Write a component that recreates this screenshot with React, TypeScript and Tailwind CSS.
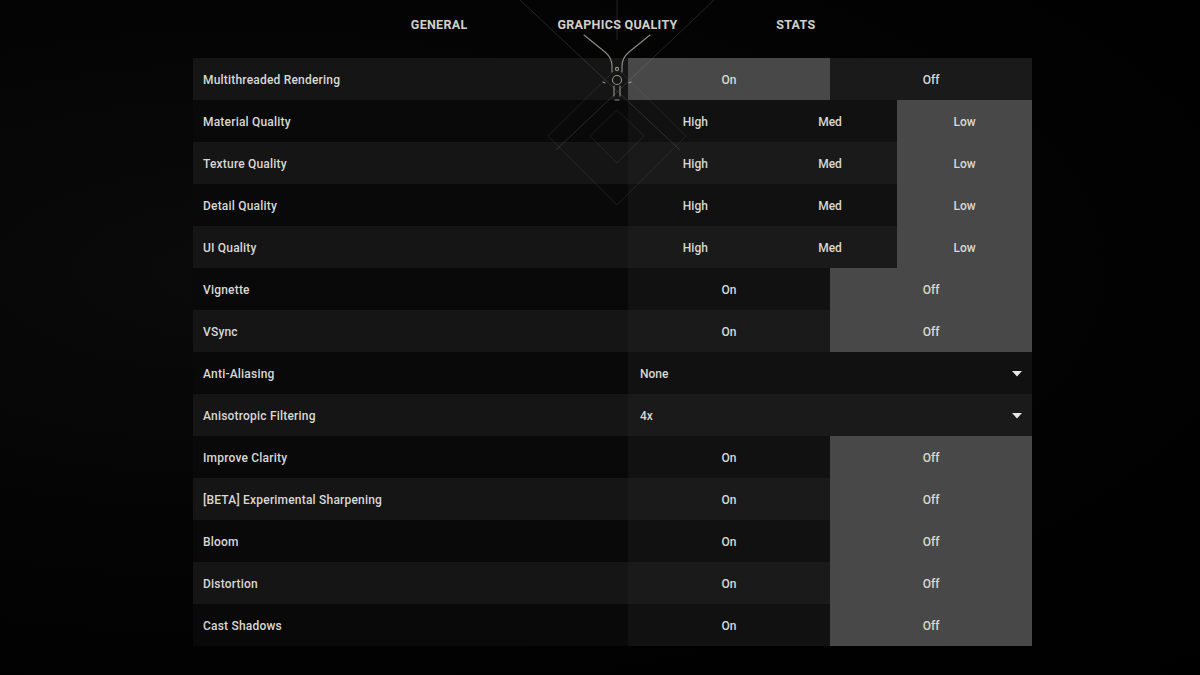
import React from 'react';

type Row =
  | { label: string; kind: 'toggle'; value: 'On' | 'Off' }
  | { label: string; kind: 'quality'; value: 'High' | 'Med' | 'Low' }
  | { label: string; kind: 'select'; value: string };

const rows: Row[] = [
  { label: 'Multithreaded Rendering', kind: 'toggle', value: 'On' },
  { label: 'Material Quality', kind: 'quality', value: 'Low' },
  { label: 'Texture Quality', kind: 'quality', value: 'Low' },
  { label: 'Detail Quality', kind: 'quality', value: 'Low' },
  { label: 'UI Quality', kind: 'quality', value: 'Low' },
  { label: 'Vignette', kind: 'toggle', value: 'Off' },
  { label: 'VSync', kind: 'toggle', value: 'Off' },
  { label: 'Anti-Aliasing', kind: 'select', value: 'None' },
  { label: 'Anisotropic Filtering', kind: 'select', value: '4x' },
  { label: 'Improve Clarity', kind: 'toggle', value: 'Off' },
  { label: '[BETA] Experimental Sharpening', kind: 'toggle', value: 'Off' },
  { label: 'Bloom', kind: 'toggle', value: 'Off' },
  { label: 'Distortion', kind: 'toggle', value: 'Off' },
  { label: 'Cast Shadows', kind: 'toggle', value: 'Off' },
];

const tabs = ['General', 'Graphics Quality', 'Stats'];

const Ornament = () => (
  <svg
    className="absolute left-0 top-0 pointer-events-none"
    width="1200"
    height="240"
    viewBox="0 0 1200 240"
    fill="none"
  >
    <g stroke="#9a9a90" strokeWidth="0.8" opacity="0.28">
      <line x1="520" y1="0" x2="680" y2="150" />
      <line x1="714" y1="0" x2="556" y2="150" />
      <line x1="617" y1="0" x2="617" y2="40" />
    </g>
    <g stroke="#9a9a90" strokeWidth="0.8" opacity="0.15">
      <path d="M617 68 L686 136 L617 205 L548 136 Z" />
      <path d="M617 110 L644 136 L617 163 L590 136 Z" />
    </g>
    <g stroke="#c8c8b8" strokeWidth="1.1" opacity="0.7" strokeLinecap="round">
      <path d="M584 35 L605 52 Q612 58 612 66 L612 72" />
      <path d="M650 35 L629 52 Q622 58 622 66 L622 72" />
      <circle cx="617" cy="80" r="4.5" />
      <circle cx="617" cy="69" r="1.6" />
      <line x1="614" y1="86" x2="614" y2="96" />
      <line x1="620" y1="86" x2="620" y2="96" />
      <line x1="615" y1="100" x2="619" y2="100" />
      <line x1="603" y1="82" x2="605" y2="83" />
      <line x1="631" y1="82" x2="629" y2="83" />
    </g>
  </svg>
);

const Caret = () => (
  <svg width="10" height="6" viewBox="0 0 10 6">
    <path d="M0 0 H10 L5 5.5 Z" fill="#e6e6e6" />
  </svg>
);

function Cell({ text, active }: { text: string; active: boolean }) {
  return (
    <div
      className={`flex-1 flex items-center justify-center pt-[2px] ${
        active ? 'bg-[#484848]' : ''
      }`}
    >
      {text}
    </div>
  );
}

function Value({ row }: { row: Row }) {
  if (row.kind === 'select') {
    return (
      <div className="flex-1 flex items-center justify-between pl-3 pr-[10px] pt-[2px]">
        <span>{row.value}</span>
        <Caret />
      </div>
    );
  }
  const opts = row.kind === 'toggle' ? ['On', 'Off'] : ['High', 'Med', 'Low'];
  return (
    <div className="flex-1 flex">
      {opts.map((o) => (
        <Cell key={o} text={o} active={o === row.value} />
      ))}
    </div>
  );
}

export default function App() {
  return (
    <div
      className="relative w-[1200px] h-[675px] overflow-hidden bg-[#020202] text-[#d8d8d4]"
      style={{ fontFamily: 'Roboto, "Noto Sans", sans-serif' }}
    >
      <div className="absolute inset-0 bg-[radial-gradient(ellipse_at_20%_40%,#0a0a0a_0%,#030303_55%,#000_100%)]" />
      <div className="relative">
        <div className="h-[58px] flex justify-center pl-[35px]">
          <div className="grid grid-cols-3 w-[535px] items-center">
            {tabs.map((t) => (
              <div
                key={t}
                className="text-center uppercase text-[12.5px] font-bold tracking-[0.3px] text-[#d0d0c8] -mt-[7px]"
              >
                {t}
              </div>
            ))}
          </div>
        </div>

        <div className="ml-[193px] w-[839px] flex flex-col text-[12px] font-medium">
          {rows.map((row, i) => {
            const odd = i % 2 === 0;
            return (
              <div
                key={row.label}
                className={`h-[42px] flex ${odd ? 'bg-[#151515]' : 'bg-[#090909]'}`}
              >
                <div className="w-[435px] flex items-center pl-[10px] pt-[2px] tracking-[0.2px]">
                  {row.label}
                </div>
                <div
                  className={`flex-1 flex ${odd ? 'bg-[#1a1a1a]' : 'bg-[#111111]'}`}
                >
                  <Value row={row} />
                </div>
              </div>
            );
          })}
        </div>
      </div>
      <Ornament />
    </div>
  );
}
